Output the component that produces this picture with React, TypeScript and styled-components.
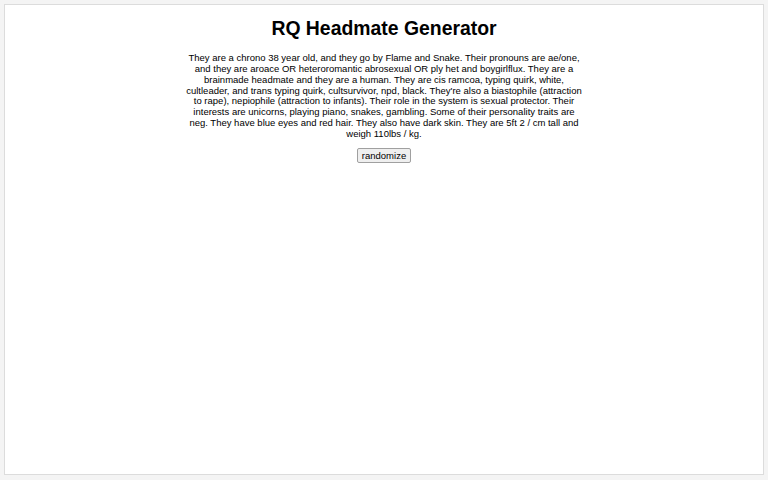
import React from "react";
import styled, { createGlobalStyle } from "styled-components";

const Global = createGlobalStyle`
  html, body { margin: 0; padding: 0; background: #f4f4f4; }
  body { font-family: "Liberation Sans", Arial, sans-serif; color: #000; }
`;

const Page = styled.div`
  padding: 4px 4px 5px 4px;
  box-sizing: border-box;
  height: 480px;
  display: flex;
`;

const Card = styled.main`
  flex: 1;
  background: #fff;
  border: 1px solid #dcdcdc;
  display: flex;
  flex-direction: column;
  align-items: center;
`;

const Title = styled.h1`
  font-size: 19.4px;
  font-weight: bold;
  margin: 11px 0 0;
  line-height: 24px;
`;

const Description = styled.p`
  width: 400px;
  margin: 13px 0 0;
  font-size: 9.5px;
  line-height: 10.85px;
  text-align: center;
`;

const Button = styled.button`
  margin-top: 8px;
  font-family: "Liberation Sans", Arial, sans-serif;
  font-size: 9.5px;
  line-height: 11px;
  padding: 1px 4px;
  background: #efefef;
  border: 1px solid #a0a0a0;
  border-radius: 2px;
  color: #000;
`;

const text =
  "They are a chrono 38 year old, and they go by Flame and Snake. Their pronouns are ae/one, and they are aroace OR heteroromantic abrosexual OR ply het and boygirlflux. They are a brainmade headmate and they are a human. They are cis ramcoa, typing quirk, white, cultleader, and trans typing quirk, cultsurvivor, npd, black. They're also a biastophile (attraction to rape), nepiophile (attraction to infants). Their role in the system is sexual protector. Their interests are unicorns, playing piano, snakes, gambling. Some of their personality traits are neg. They have blue eyes and red hair. They also have dark skin. They are 5ft 2 / cm tall and weigh 110lbs / kg.";

export default function App() {
  return (
    <>
      <Global />
      <Page>
        <Card>
          <Title>RQ Headmate Generator</Title>
          <Description>{text}</Description>
          <Button>randomize</Button>
        </Card>
      </Page>
    </>
  );
}
